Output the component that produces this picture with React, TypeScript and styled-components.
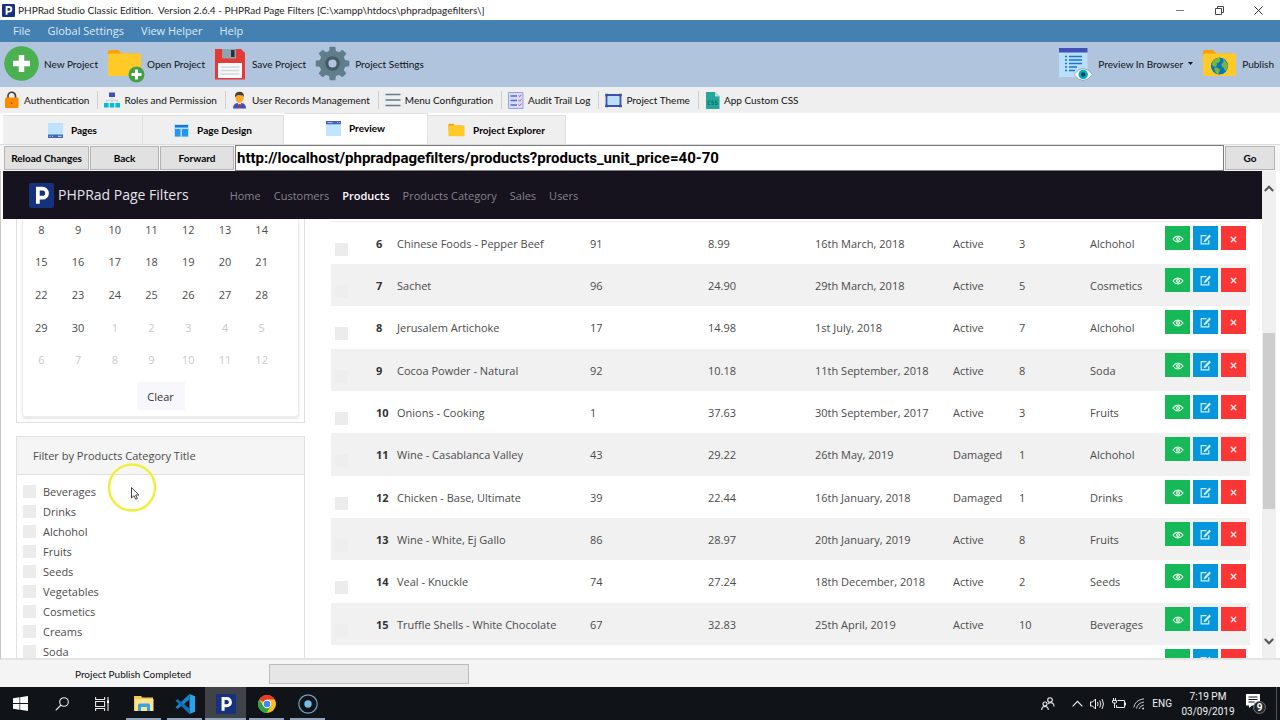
import React from 'react';
import styled, { createGlobalStyle, css } from 'styled-components';

const pageFont = '"Open Sans", "Noto Sans", sans-serif';
const chromeFont = 'Lato, "Open Sans", sans-serif';
const trayFont = 'Roboto, "Open Sans", sans-serif';

const GlobalStyle = createGlobalStyle`
  *, *::before, *::after { box-sizing: border-box; }
  body { margin: 0; background: #fff; font-family: ${chromeFont}; font-size: 10px; color: #111; }
  button, input { font: inherit; color: inherit; margin: 0; }
  button { border: 0; background: none; padding: 0; }
  a { color: inherit; text-decoration: none; }
  svg { display: block; flex: none; }
`;

const Screen = styled.div`
  display: flex;
  flex-direction: column;
  height: 100vh;
  position: relative;
  overflow: hidden;
`;

/* Window chrome */

const TitleBar = styled.header`
  display: flex;
  align-items: center;
  height: 20px;
  padding: 0 4px 0 2px;
  gap: 3px;
  flex: none;
`;
const Title = styled.h1`
  flex: 1;
  margin: 0;
  font-size: 10px;
  font-weight: 400;
  white-space: pre;
  color: #222;
`;
const CaptionButton = styled.button`
  display: flex;
  align-items: center;
  justify-content: center;
  width: 36px;
  height: 18px;
  color: #333;
`;
const MenuBar = styled.nav`
  display: flex;
  align-items: center;
  height: 22px;
  padding-left: 5px;
  gap: 1px;
  flex: none;
  background: #4480b2;
`;
const MenuButton = styled.button`
  height: 22px;
  padding: 0 8px 1px;
  font-family: ${pageFont};
  font-size: 11px;
  color: #dcebf7;
  white-space: nowrap;
`;
const ToolBar = styled.div`
  display: flex;
  align-items: center;
  height: 45px;
  padding: 0 6px 2px 4px;
  gap: 9px;
  flex: none;
  background: #b0c4de;
`;
const ToolButton = styled.button<{ $gap?: number }>`
  display: flex;
  align-items: center;
  gap: ${(p) => p.$gap ?? 5}px;
  white-space: nowrap;
`;
const Spacer = styled.div`
  flex: 1;
`;
const SubBar = styled.div`
  display: flex;
  align-items: center;
  height: 26px;
  padding-left: 4px;
  flex: none;
  background: #efefef;
`;
const SubButton = styled.button`
  display: flex;
  align-items: center;
  gap: 4px;
  height: 18px;
  padding: 0 8px 0 6px;
  border-right: 1px solid #cfcfcf;
  white-space: nowrap;
  &:first-child { padding-left: 0; }
  &:last-child { border-right: 0; }
`;

const Tabs = styled.div`
  display: flex;
  align-items: flex-end;
  height: 32px;
  padding-left: 3px;
  flex: none;
  border-bottom: 1px solid #dcdcdc;
`;
const Tab = styled.button<{ $active?: boolean; $width: number }>`
  display: flex;
  align-items: center;
  justify-content: center;
  gap: 8px;
  width: ${(p) => p.$width}px;
  height: 29px;
  border: 1px solid #e0e0e0;
  border-left-width: 0;
  border-bottom: 0;
  background: #efefef;
  font-weight: 700;
  color: #000;
  white-space: nowrap;
  ${(p) => p.$active && css`
    height: 31px;
    padding-bottom: 2px;
    background: #fff;
  `}
`;

const AddressBar = styled.form`
  display: flex;
  align-items: center;
  height: 26px;
  padding: 0 5px 0 4px;
  gap: 1px;
  flex: none;
  background: #f6f6f6;
`;
const AddressButton = styled.button<{ $width: number }>`
  width: ${(p) => p.$width}px;
  height: 24px;
  flex: none;
  border: 1px solid #b4b4b4;
  background: #e1e1e1;
  font-weight: 700;
  color: #000;
  white-space: nowrap;
`;
const AddressInput = styled.input`
  flex: 1;
  min-width: 0;
  height: 26px;
  padding: 0 0 0 1px;
  border: 1px solid #7c7c7c;
  background: #fff;
  font-family: ${trayFont};
  font-size: 15px;
  font-weight: 700;
  color: #000;
`;

/* Embedded browser */

const WebView = styled.section`
  display: flex;
  flex: 1;
  min-height: 0;
  padding: 0 4px 0 2px;
  border-left: 1px solid #c8c8c8;
  border-bottom: 2px solid #e4e4e4;
  font-family: ${pageFont};
  font-size: 11px;
  color: #4b4b4b;
`;
const Page = styled.div`
  display: flex;
  flex-direction: column;
  flex: 1;
  min-width: 0;
`;
const Navbar = styled.nav`
  display: flex;
  align-items: center;
  height: 48px;
  padding-left: 26px;
  flex: none;
  background: #16121e;
  position: relative;
`;
const Brand = styled.a`
  display: flex;
  align-items: center;
  gap: 4px;
  margin-right: 33px;
  font-size: 14px;
  line-height: 24px;
  color: #e4e4ea;
  white-space: nowrap;
`;
const NavLink = styled.a<{ $active?: boolean }>`
  margin: 1px 0 0 8px;
  padding-right: 5px;
  color: ${(p) => (p.$active ? '#fff' : '#85828c')};
  font-weight: ${(p) => (p.$active ? 600 : 400)};
  white-space: nowrap;
`;
const PageBody = styled.div`
  display: flex;
  flex: 1;
  min-height: 0;
  padding: 0 12px 0 13px;
  gap: 26px;
  overflow: hidden;
`;
const Sidebar = styled.aside`
  width: 289px;
  flex: none;
`;
const CalendarCard = styled.section`
  padding: 0 5px 5px;
  margin-bottom: 13px;
  border: 1px solid #e0e0e0;
  border-top: 0;
`;
const CalendarInner = styled.div`
  display: flex;
  flex-direction: column;
  align-items: flex-start;
  padding-bottom: 6px;
  border: 1px solid #ececec;
  border-top: 0;
  border-radius: 0 0 4px 4px;
  box-shadow: 0 2px 3px #e6e6e6;
`;
const Days = styled.div`
  display: grid;
  grid-template-columns: repeat(7, 1fr);
  grid-template-rows: repeat(5, 1fr);
  width: 257px;
  height: 163px;
  margin-top: -6px;
`;
const Day = styled.button<{ $muted?: boolean }>`
  color: ${(p) => (p.$muted ? '#c9c9c9' : '#4b4b4b')};
`;
const ClearButton = styled.button`
  align-self: center;
  width: 48px;
  height: 28px;
  margin-top: 6px;
  background: #f8f8fc;
  color: #333;
`;
const FilterCard = styled.section`
  border: 1px solid #e0e0e0;
  border-bottom: 0;
`;
const FilterTitle = styled.h2`
  margin: 0;
  padding: 0 16px;
  font-size: 11px;
  font-weight: 400;
  line-height: 37px;
  background: #f5f5f5;
  border-bottom: 1px solid #e0e0e0;
`;
const FilterList = styled.div`
  padding: 6px 6px 0;
`;
const FilterOption = styled.label`
  display: flex;
  align-items: center;
  gap: 7px;
  height: 20px;
`;
const Tick = styled.input`
  display: block;
  appearance: none;
  width: 13px;
  height: 13px;
  background: #ececec;
`;

const TableArea = styled.div`
  flex: 1;
  min-width: 0;
  padding-top: 2px;
`;
const Table = styled.table`
  width: 100%;
  table-layout: fixed;
  border-collapse: collapse;
  border-top: 1px solid #ececec;
  tr { height: 42px; }
  tr:nth-child(3n) { height: 43px; }
  tr:nth-child(2n) { background: #f1f1f1; }
  tr:nth-child(2n) ${Tick} { background: #eee; }
  td, th {
    padding: 1px 0 0;
    text-align: left;
    white-space: nowrap;
  }
  th { font-weight: 700; color: #333; }
  td:first-child { padding: 13px 0 0 4px; }
  td:last-child { padding: 4px 4px 0 0; vertical-align: top; }
`;
const Actions = styled.div`
  display: flex;
  justify-content: flex-end;
  gap: 3px;
`;
const ActionButton = styled.button<{ $color: string }>`
  display: flex;
  align-items: center;
  justify-content: center;
  width: 25px;
  height: 24px;
  padding-top: 2px;
  background: ${(p) => p.$color};
  color: #fff;
`;
const ScrollBar = styled.div`
  display: flex;
  flex-direction: column;
  align-items: center;
  width: 14px;
  padding: 14px 0 13px;
  flex: none;
  background: #f0f0f0;
  color: #505050;
`;
const ScrollTrack = styled.div`
  display: flex;
  flex-direction: column;
  flex: 1;
  width: 12px;
  padding: 141px 0 0;
`;
const ScrollThumb = styled.div`
  height: 176px;
  background: #cdcdcd;
`;

/* Status bar and taskbar */

const StatusBar = styled.footer`
  display: flex;
  align-items: center;
  height: 27px;
  padding-left: 75px;
  flex: none;
  background: #f4f4f4;
`;
const StatusText = styled.span`
  width: 194px;
`;
const ProgressTrack = styled.div`
  width: 200px;
  height: 20px;
  border: 1px solid #bcbcbc;
  background: #e6e6e6;
`;
const TaskBar = styled.nav`
  display: flex;
  align-items: center;
  height: 33px;
  flex: none;
  background: #101318;
  color: #f2f2f2;
  font-family: ${trayFont};
`;
const TaskButton = styled.button<{ $running?: boolean; $active?: boolean }>`
  display: flex;
  align-items: center;
  justify-content: center;
  width: 41px;
  height: 33px;
  background: ${(p) => (p.$active ? '#3f4249' : 'transparent')};
  position: relative;
  ${(p) => p.$running && css`
    &::after {
      content: '';
      position: absolute;
      left: ${p.$active ? 0 : 3}px;
      right: ${p.$active ? 0 : 3}px;
      bottom: 0;
      height: 2px;
      background: #93a3bd;
    }
  `}
`;
const Tray = styled.div`
  display: flex;
  align-items: center;
  gap: 7px;
`;
const TrayLead = styled.div`
  margin-right: 10px;
`;
const Clock = styled.time`
  width: 58px;
  line-height: 15px;
  text-align: center;
`;
const Notifications = styled.button`
  margin-left: 2px;
`;
const DesktopEdge = styled.div`
  width: 4px;
  height: 33px;
  margin-left: 2px;
  border-left: 1px solid #50535a;
`;
const Pointer = styled.div`
  position: absolute;
  left: 107px;
  top: 463px;
  pointer-events: none;
`;

/* Icons */

const PLogo = ({ size }: { size: number }) => (
  <svg width={size} height={size} viewBox="0 0 24 24">
    <rect width="24" height="24" rx="2" fill="#17327c" />
    <path d="M8.5 20V5.500h4.500a4.300 4.300 0 0 1 0 8.600H8.500" fill="none" stroke="#fff" strokeWidth="3.600" />
  </svg>
);
const PlusIcon = () => (
  <svg width="35" height="35" viewBox="0 0 35 35">
    <circle cx="17.500" cy="17.500" r="17.300" fill="#4caf50" />
    <path d="M17.500 9v17M9 17.500h17" stroke="#fff" strokeWidth="5.500" />
  </svg>
);
const FolderShape = ({ y = 0 }: { y?: number }) => (
  <g transform={`translate(0 ${y})`}>
    <path d="M1 2.500Q1 1 2.500 1H11l3.500 3.500H30v10H1z" fill="#ffa000" />
    <path d="M1 7Q1 4.500 3 4.500h29q2 0 2 2V25q0 2-2 2H3q-2 0-2-2z" fill="#ffca28" />
  </g>
);
const FolderPlusIcon = () => (
  <svg width="38" height="38" viewBox="0 0 38 38">
    <FolderShape y={4} />
    <circle cx="29.500" cy="29.500" r="8" fill="#43a047" />
    <path d="M29.500 24.500v10M24.500 29.500h10" stroke="#fff" strokeWidth="3" />
  </svg>
);
const FolderGlobeIcon = () => (
  <svg width="35" height="35" viewBox="0 0 35 35">
    <FolderShape y={3} />
    <circle cx="17.500" cy="20" r="8.600" fill="#0277bd" />
    <path d="M10.500 15q3-3.500 7-3.300l1 2.500-2 2.500-2 .800.500 2.500-3 1-2.200-2zM12 22l3-.500 3 2-1.500 4.500-2.500-.500zM21 13l3 2.500 2 4-1 4-2 1.500-1-3-2-1-.500-3 2-2z" fill="#7cb342" />
  </svg>
);
const FloppyIcon = () => (
  <svg width="31" height="32" viewBox="0 0 31 32">
    <path d="M1 1h26l4 4v26.500H1z" fill="#e53935" />
    <path d="M8 1h14v9.500H8z" fill="#90a4ae" />
    <path d="M17 2h3.500v7H17z" fill="#263238" />
    <path d="M4 15h24v15H4z" fill="#fafafa" />
    <path d="M6.500 19h19M6.500 22.500h19M6.500 26h19" stroke="#cfd8dc" strokeWidth="1.300" />
  </svg>
);
const GearIcon = () => (
  <svg width="35" height="35" viewBox="0 0 35 35">
    <circle cx="17.500" cy="17.500" r="13" fill="#607d8b" />
    <g fill="#607d8b">
      {[0, 45, 90, 135, 180, 225, 270, 315].map((a) => (
        <path key={a} d="M13.800 7l.900-6.300h5.600l.900 6.300z" transform={`rotate(${a} 17.500 17.500)`} />
      ))}
    </g>
    <circle cx="17.500" cy="17.500" r="5.700" fill="#b0c4de" stroke="#455a64" strokeWidth="3.200" />
  </svg>
);
const PreviewEyeIcon = () => (
  <svg width="36" height="36" viewBox="0 0 36 36">
    <path d="M2 2h28.500v29H2z" fill="#bbdefb" />
    <path d="M2 2h28.500v4.500H2z" fill="#3f51b5" />
    <path d="M8 10.500h2M12 10.500h13M8 14h2M12 14h13M8 17.500h2M12 17.500h13M8 21h2M12 21h8M8 24.500h2M12 24.500h6" stroke="#1976d2" strokeWidth="1.600" />
    <path d="M17 28.500q4.500-6 9.200-6t9.200 6q-4.500 6-9.200 6t-9.200-6z" fill="#fff" stroke="#90a4ae" strokeWidth="1" />
    <circle cx="26.200" cy="28.500" r="4.700" fill="#00acc1" />
    <circle cx="26.200" cy="28.500" r="2.200" fill="#0a4552" />
  </svg>
);
const Caret = () => (
  <svg width="5" height="3" viewBox="0 0 5 3"><path d="M0 0h5L2.500 3z" fill="#111" /></svg>
);
const LockIcon = () => (
  <svg width="16" height="18" viewBox="0 0 16 18">
    <path d="M4 8V5a3.700 3.700 0 0 1 7.500 0v3" fill="none" stroke="#424242" strokeWidth="1.700" />
    <rect x="1" y="6.500" width="13.500" height="10.500" rx="1" fill="#fb8c00" />
    <circle cx="7.700" cy="12" r=".9" fill="#a65300" />
  </svg>
);
const RolesIcon = () => (
  <svg width="16" height="16" viewBox="0 0 16 16">
    <path d="M8 5v3.500M2.500 11V8.500h11V11M8 8.500V11" fill="none" stroke="#cfd8dc" strokeWidth="1.400" />
    <path d="M5 .500h6v4.500H5z" fill="#3f51b5" />
    <path d="M0 11h4.600v4.500H0zM5.700 11h4.600v4.500H5.700zM11.400 11H16v4.500h-4.600z" fill="#00bcd4" />
  </svg>
);
const UserIcon = () => (
  <svg width="16" height="18" viewBox="0 0 16 18">
    <path d="M1 17.500q0-5 4.500-5.500h4q4.500.500 4.500 5.500z" fill="#3f51b5" />
    <path d="M5.500 11.500l2 3.500 2-3.500z" fill="#fff" />
    <path d="M7 13h1.200l.500 4h-2.200z" fill="#d32f2f" />
    <ellipse cx="7.500" cy="7" rx="4" ry="5" fill="#ffa726" />
    <path d="M3 6.500Q2.500 1 7 .800q5.500-.300 5 5.700l-1-2-5-.500-1.800 1z" fill="#424242" />
  </svg>
);
const LinesIcon = () => (
  <svg width="16" height="14" viewBox="0 0 16 14"><path d="M.500 1.500h15M.500 7h15M.500 12.500h15" stroke="#607d8b" strokeWidth="1.500" /></svg>
);
const AuditIcon = () => (
  <svg width="16" height="17" viewBox="0 0 16 17">
    <path d="M.5.500h14.500v16H.500z" fill="#d5dcf7" stroke="#98a2dc" />
    <path d="M2.500 4h6.500M2.500 8.500h6.500M2.500 13h6.500" stroke="#5c6bc0" strokeWidth="1.300" />
    <path d="M10.700 3.500l1 1.200 1.800-2M10.700 8l1 1.200 1.800-2M10.700 12.500l1 1.200 1.800-2" fill="none" stroke="#e0427c" />
  </svg>
);
const ThemeIcon = () => (
  <svg width="17" height="15" viewBox="0 0 17 15">
    <path d="M1.500 2h14v11h-14z" fill="#bbdefb" stroke="#3f51b5" strokeWidth="1.800" />
    <path d="M.300.800h2.500v2.500H.300zM14.200.800h2.500v2.500h-2.500zM.300 11.700h2.500v2.500H.300zM14.200 11.700h2.500v2.500h-2.500z" fill="#3949ab" />
  </svg>
);
const CssIcon = () => (
  <svg width="15" height="17" viewBox="0 0 15 17">
    <path d="M1 0h9l4.500 4.500V17H1z" fill="#26a69a" />
    <path d="M10 0v4.500h4.500z" fill="#b2dfdb" />
    <path d="M5.300 9H3.200v3.500h2.100M8.800 9H6.900v1.800h1.700v1.700H6.600M12.300 9h-1.900v1.800h1.700v1.700h-2" fill="none" stroke="#0b6b60" strokeWidth=".8" />
  </svg>
);
const PagesIcon = () => (
  <svg width="15" height="15" viewBox="0 0 15 15">
    <path d="M0 0h15v15H0z" fill="#bfe3fd" /><path d="M0 11.500h15V15H0z" fill="#3f68b5" />
    <path d="M1.500 13.300h1M4 13.300h1M10 13.300h3.500" stroke="#cfe0fa" />
  </svg>
);
const DesignIcon = () => (
  <svg width="15" height="13" viewBox="0 0 15 13">
    <path d="M0 0h15v13H0z" fill="#bbdefb" />
    <path d="M1 1h13v2.500H1z" fill="#1976d2" /><path d="M1 5h5.500v7.500H1zM8 5h6v7.500H8z" fill="#2196f3" />
  </svg>
);
const PreviewIcon = () => (
  <svg width="15" height="15" viewBox="0 0 15 15">
    <path d="M0 0h15v15H0z" fill="#c2e5ff" /><path d="M0 0h15v3.300H0z" fill="#4560b8" />
    <path d="M1.500 1.600h5M11 1.600h1M13 1.600h1" stroke="#aebdea" />
  </svg>
);
const SmallFolderIcon = () => (
  <svg width="17" height="14" viewBox="0 0 35 28"><FolderShape /></svg>
);
const EyeIcon = () => (
  <svg width="12" height="8" viewBox="0 0 12 8">
    <path d="M1 4Q3 1.200 6 1.200T11 4Q9 6.800 6 6.800T1 4z" fill="none" stroke="#dcf8e4" strokeWidth="1.200" />
    <circle cx="6" cy="4" r="2.100" fill="#dcf8e4" /><circle cx="6" cy="4" r=".8" fill="#16b857" />
  </svg>
);
const EditIcon = () => (
  <svg width="11" height="11" viewBox="0 0 11 11">
    <path d="M6.500 1.700H1.200v8.100h7.600V6.200" fill="none" stroke="#d5efff" strokeWidth="1.200" />
    <path d="M9.500.500L4.300 6l-.6 2.200 2.200-.6 5-5.300z" fill="#d5efff" />
  </svg>
);
const CrossIcon = () => (
  <svg width="7" height="7" viewBox="0 0 7 7"><path d="M.8.800l5.400 5.400M6.200.800L.800 6.200" stroke="#ffe0e0" strokeWidth="1.500" /></svg>
);
const ArrowIcon = ({ down }: { down?: boolean }) => (
  <svg width="10" height="7" viewBox="0 0 10 7">
    <path d={down ? 'M.8 1l4.200 4.300L9.200 1' : 'M.8 6L5 1.700 9.200 6'} fill="none" stroke="#555" strokeWidth="2" />
  </svg>
);

const WindowsIcon = () => (
  <svg width="15" height="15" viewBox="0 0 15 15"><path d="M0 2.200l6.500-.9v5.800H0zM7.200 1.200L15 0v7.100H7.200zM0 7.900h6.500v5.800L0 12.800zM7.200 7.900H15V15l-7.800-1.200z" fill="#fff" /></svg>
);
const SearchIcon = () => (
  <svg width="14" height="14" viewBox="0 0 14 14" fill="none" stroke="#eee" strokeWidth="1.100"><circle cx="9" cy="5" r="4.300" /><path d="M6 8L.700 13.300" /></svg>
);
const TaskViewIcon = () => (
  <svg width="15" height="14" viewBox="0 0 15 14" fill="none" stroke="#e6e6e6" strokeWidth="1.100"><path d="M.6 0v2.500h9V0M.600 14v-2.500h9V14M.600 4.500h9v5h-9zM13 0v14" /><path d="M12 3.500h2v2.500h-2z" fill="#fff" stroke="none" /></svg>
);
const ExplorerIcon = () => (
  <svg width="20" height="17" viewBox="0 0 20 17">
    <path d="M0 1h7l1.500 1.500H19V16H0z" fill="#f5c84b" /><path d="M1 4h18.500v12H1z" fill="#fde394" />
    <path d="M4 16V10q0-1.500 1.500-1.500h9Q16 8.500 16 10v6h-3v-4H7v4z" fill="#35a5dc" />
  </svg>
);
const CodeIcon = () => (
  <svg width="20" height="20" viewBox="0 0 20 20">
    <path d="M14.500 0L20 2.300v15.400L14.500 20z" fill="#29a3ec" />
    <path d="M14.500 0v5.500L2.500 15 .500 13.300z" fill="#1683cd" /><path d="M14.500 20v-5.500L2.500 5 .500 6.700z" fill="#0f6fb5" />
  </svg>
);
const ChromeIcon = () => (
  <svg width="18" height="18" viewBox="0 0 18 18">
    <circle cx="9" cy="9" r="9" fill="#fbc116" />
    <path d="M9 9L1.200 4.500A9 9 0 0 1 16.800 4.500H9z" fill="#e33b2e" />
    <path d="M9 9l-3.500 2.500L1.200 4.500A9 9 0 0 0 8.500 18L13 11z" fill="#2da14c" />
    <circle cx="9" cy="9" r="4.200" fill="#fff" /><circle cx="9" cy="9" r="3.300" fill="#4286f5" />
  </svg>
);
const RecorderIcon = () => (
  <svg width="20" height="20" viewBox="0 0 20 20"><circle cx="10" cy="10" r="9.200" fill="none" stroke="#6fa5bd" strokeWidth="1.200" /><circle cx="10" cy="10" r="3.700" fill="#71bce8" /></svg>
);
const PeopleIcon = () => (
  <svg width="14" height="14" viewBox="0 0 14 14" fill="none" stroke="#eee" strokeWidth="1.100"><circle cx="9" cy="3" r="2.300" /><circle cx="4" cy="7" r="2" /><path d="M.700 13q0-3.500 3.300-3.500T7.300 13M7 7q1-1.300 2.500-1.300 3.500 0 3.500 3.800" /></svg>
);
const ChevronUpIcon = () => (
  <svg width="11" height="7" viewBox="0 0 11 7"><path d="M.6 6.300l4.900-5 4.900 5" fill="none" stroke="#eee" strokeWidth="1.200" /></svg>
);
const SpeakerIcon = () => (
  <svg width="15" height="12" viewBox="0 0 15 12" fill="none" stroke="#eee"><path d="M.5 4h2L5.500 1v10L2.500 8h-2zM7.500 4q1.200 2 0 4M9.700 2.500q2.200 3.500 0 7M12 1q3 5 0 10" /></svg>
);
const BatteryIcon = () => (
  <svg width="14" height="11" viewBox="0 0 14 11" fill="none" stroke="#eee"><path d="M5.500 2.500h7v7h-8V7M13.500 4.500v3M1.500 0v2.500M3.500 0v2.500M.5 2.500h4v1.500q0 1-1 1h-2q-1 0-1-1zM2.500 5v5" /></svg>
);
const WifiIcon = () => (
  <svg width="12" height="12" viewBox="0 0 12 12" fill="none" stroke="#c8c8c8"><path d="M.8 9.500Q2 2 11 .800M3.500 10.500Q4.500 5 11 4M6 11Q7 7.500 11 7" /><circle cx="10" cy="10.500" r=".9" fill="#eee" stroke="none" /></svg>
);
const NoticeIcon = () => (
  <svg width="21" height="20" viewBox="0 0 21 20">
    <path d="M0 0h14v11.500H6L3 14v-2.500H0z" fill="#fff" />
    <path d="M2.500 3h9M2.500 5.500h9M2.500 8h6" stroke="#15181d" />
    <circle cx="13.500" cy="13.500" r="6" fill="#24272b" stroke="#73767b" />
    <text x="13.500" y="17" textAnchor="middle" fontSize="10" fontFamily="Roboto, sans-serif" fontWeight="700" fill="#fff">9</text>
  </svg>
);

/* Data */

const days = [8, 9, 10, 11, 12, 13, 14, 15, 16, 17, 18, 19, 20, 21, 22, 23, 24, 25, 26, 27, 28, 29, 30];
const nextDays = [1, 2, 3, 4, 5, 6, 7, 8, 9, 10, 11, 12];
const categories = ['Beverages', 'Drinks', 'Alchohol', 'Fruits', 'Seeds', 'Vegetables', 'Cosmetics', 'Creams', 'Soda'];
const columns = [45, 21, 193, 118, 107, 138, 66, 71, 74, 86];
const products: string[][] = [
  ['6', 'Chinese Foods - Pepper Beef', '91', '8.99', '16th March, 2018', 'Active', '3', 'Alchohol'],
  ['7', 'Sachet', '96', '24.90', '29th March, 2018', 'Active', '5', 'Cosmetics'],
  ['8', 'Jerusalem Artichoke', '17', '14.98', '1st July, 2018', 'Active', '7', 'Alchohol'],
  ['9', 'Cocoa Powder - Natural', '92', '10.18', '11th September, 2018', 'Active', '8', 'Soda'],
  ['10', 'Onions - Cooking', '1', '37.63', '30th September, 2017', 'Active', '3', 'Fruits'],
  ['11', 'Wine - Casablanca Valley', '43', '29.22', '26th May, 2019', 'Damaged', '1', 'Alchohol'],
  ['12', 'Chicken - Base, Ultimate', '39', '22.44', '16th January, 2018', 'Damaged', '1', 'Drinks'],
  ['13', 'Wine - White, Ej Gallo', '86', '28.97', '20th January, 2019', 'Active', '8', 'Fruits'],
  ['14', 'Veal - Knuckle', '74', '27.24', '18th December, 2018', 'Active', '2', 'Seeds'],
  ['15', 'Truffle Shells - White Chocolate', '67', '32.83', '25th April, 2019', 'Active', '10', 'Beverages'],
  ['', '', '', '', '', '', '', ''],
];
const navItems = ['Home', 'Customers', 'Products', 'Products Category', 'Sales', 'Users'];

export default function App() {
  return (
    <Screen>
      <GlobalStyle />
      <TitleBar>
        <PLogo size={13} />
        <Title>{'PHPRad Studio Classic Edition.  Version 2.6.4 - PHPRad Page Filters [C:\\xampp\\htdocs\\phpradpagefilters\\]'}</Title>
        <CaptionButton aria-label="Minimize"><svg width="8" height="8" viewBox="0 0 8 8"><path d="M0 4.500h8" stroke="#777" /></svg></CaptionButton>
        <CaptionButton aria-label="Restore"><svg width="9" height="9" viewBox="0 0 9 9" fill="none" stroke="#444"><path d="M.5 2.500h6v6h-6zM2.500 2.500v-2h6v6h-2" /></svg></CaptionButton>
        <CaptionButton aria-label="Close"><svg width="9" height="9" viewBox="0 0 9 9"><path d="M.5.500l8 8M8.500.500l-8 8" stroke="#333" /></svg></CaptionButton>
      </TitleBar>

      <MenuBar>
        {['File', 'Global Settings', 'View Helper', 'Help'].map((m) => <MenuButton key={m}>{m}</MenuButton>)}
      </MenuBar>

      <ToolBar>
        <ToolButton><PlusIcon />New Project</ToolButton>
        <ToolButton $gap={2}><FolderPlusIcon />Open Project</ToolButton>
        <ToolButton $gap={7}><FloppyIcon />Save Project</ToolButton>
        <ToolButton><GearIcon />Project Settings</ToolButton>
        <Spacer />
        <ToolButton><PreviewEyeIcon />Preview In Browser<Caret /></ToolButton>
        <ToolButton><FolderGlobeIcon />Publish</ToolButton>
      </ToolBar>

      <SubBar>
        <SubButton><LockIcon />Authentication</SubButton>
        <SubButton><RolesIcon />Roles and Permission</SubButton>
        <SubButton><UserIcon />User Records Management</SubButton>
        <SubButton><LinesIcon />Menu Configuration</SubButton>
        <SubButton><AuditIcon />Audit Trail Log</SubButton>
        <SubButton><ThemeIcon />Project Theme</SubButton>
        <SubButton><CssIcon />App Custom CSS</SubButton>
      </SubBar>

      <Tabs>
        <Tab $width={140}><PagesIcon />Pages</Tab>
        <Tab $width={141}><DesignIcon />Page Design</Tab>
        <Tab $width={144} $active><PreviewIcon />Preview</Tab>
        <Tab $width={138}><SmallFolderIcon />Project Explorer</Tab>
      </Tabs>

      <AddressBar onSubmit={(e) => e.preventDefault()}>
        <AddressButton type="button" $width={85}>Reload Changes</AddressButton>
        <AddressButton type="button" $width={69}>Back</AddressButton>
        <AddressButton type="button" $width={74}>Forward</AddressButton>
        <AddressInput aria-label="Address" defaultValue="http://localhost/phpradpagefilters/products?products_unit_price=40-70" />
        <AddressButton type="submit" $width={50}>Go</AddressButton>
      </AddressBar>

      <WebView>
        <Page>
          <Navbar>
            <Brand href="#"><PLogo size={25} />PHPRad Page Filters</Brand>
            {navItems.map((n) => <NavLink key={n} href="#" $active={n === 'Products'}>{n}</NavLink>)}
          </Navbar>
          <PageBody>
            <Sidebar>
              <CalendarCard>
                <CalendarInner>
                  <Days>
                    {days.map((d) => <Day key={d}>{d}</Day>)}
                    {nextDays.map((d) => <Day key={d} $muted>{d}</Day>)}
                  </Days>
                  <ClearButton>Clear</ClearButton>
                </CalendarInner>
              </CalendarCard>
              <FilterCard>
                <FilterTitle>Filter by Products Category Title</FilterTitle>
                <FilterList>
                  {categories.map((c) => <FilterOption key={c}><Tick type="checkbox" />{c}</FilterOption>)}
                </FilterList>
              </FilterCard>
            </Sidebar>
            <TableArea>
              <Table>
                <colgroup>{columns.map((w, i) => <col key={i} width={w} />)}</colgroup>
                <tbody>
                  {products.map(([num, ...cells]) => (
                    <tr key={num}>
                      <td><Tick type="checkbox" aria-label="Select row" /></td>
                      <th scope="row">{num}</th>
                      {cells.map((c, i) => <td key={i}>{c}</td>)}
                      <td>
                        <Actions>
                          <ActionButton $color="#16b857" aria-label="View"><EyeIcon /></ActionButton>
                          <ActionButton $color="#0596dc" aria-label="Edit"><EditIcon /></ActionButton>
                          <ActionButton $color="#fb3636" aria-label="Delete"><CrossIcon /></ActionButton>
                        </Actions>
                      </td>
                    </tr>
                  ))}
                </tbody>
              </Table>
            </TableArea>
          </PageBody>
        </Page>
        <ScrollBar>
          <ArrowIcon />
          <ScrollTrack><ScrollThumb /></ScrollTrack>
          <ArrowIcon down />
        </ScrollBar>
      </WebView>

      <StatusBar>
        <StatusText>Project Publish Completed</StatusText>
        <ProgressTrack role="progressbar" aria-label="Publish progress" />
      </StatusBar>

      <TaskBar>
        <TaskButton aria-label="Start"><WindowsIcon /></TaskButton>
        <TaskButton aria-label="Search"><SearchIcon /></TaskButton>
        <TaskButton aria-label="Task view"><TaskViewIcon /></TaskButton>
        <TaskButton $running aria-label="File Explorer"><ExplorerIcon /></TaskButton>
        <TaskButton $running aria-label="Code editor"><CodeIcon /></TaskButton>
        <TaskButton $running $active aria-label="PHPRad"><PLogo size={20} /></TaskButton>
        <TaskButton $running aria-label="Chrome"><ChromeIcon /></TaskButton>
        <TaskButton $running aria-label="Recorder"><RecorderIcon /></TaskButton>
        <Spacer />
        <Tray>
          <TrayLead><PeopleIcon /></TrayLead>
          <ChevronUpIcon />
          <SpeakerIcon />
          <BatteryIcon />
          <WifiIcon />
          <span>ENG</span>
          <Clock>7:19 PM<br />03/09/2019</Clock>
          <Notifications aria-label="Notifications"><NoticeIcon /></Notifications>
          <DesktopEdge />
        </Tray>
      </TaskBar>

      <Pointer>
        <svg width="50" height="50" viewBox="0 0 50 50">
          <circle cx="25" cy="24.500" r="23" fill="none" stroke="#eff03e" strokeWidth="2.500" />
          <path d="M24.500 24.500v10.500l2.500-2.300 1.700 3.600 1.600-.8-1.700-3.500h3.300z" fill="#fff" stroke="#333" strokeWidth=".9" />
        </svg>
      </Pointer>
    </Screen>
  );
}
